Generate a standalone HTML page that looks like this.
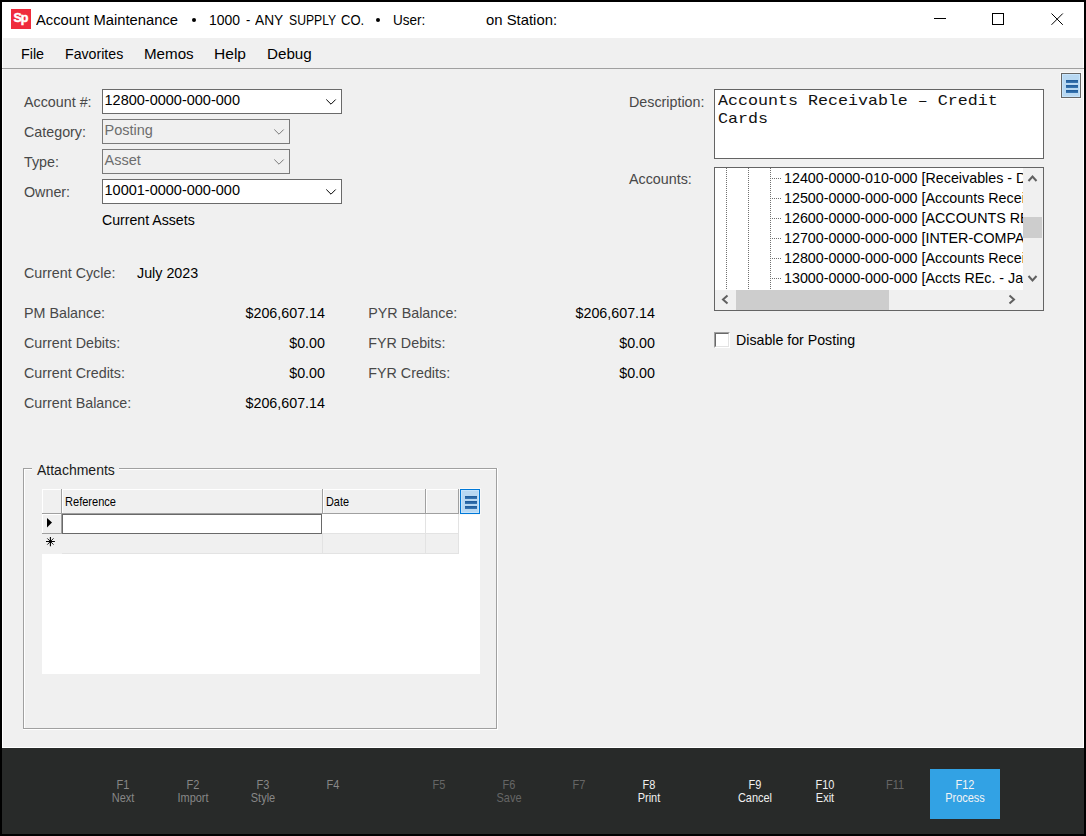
<!DOCTYPE html>
<html><head><meta charset="utf-8">
<style>
html,body{margin:0;padding:0;}
body{width:1086px;height:836px;position:relative;overflow:hidden;background:#000;font-family:"Liberation Sans",sans-serif;}
.a{position:absolute;}
.t{position:absolute;white-space:pre;line-height:1;}
</style></head><body>
<div class="a" style="left:2px;top:2px;width:1082px;height:36px;background:#fff"></div>
<div class="a" style="left:2px;top:38px;width:1082px;height:30px;background:#f0f0f0"></div>
<div class="a" style="left:2px;top:38px;width:1px;height:30px;background:#fff"></div>
<div class="a" style="left:1083px;top:38px;width:1px;height:30px;background:#fff"></div>
<div class="a" style="left:2px;top:68px;width:1082px;height:1px;background:#a0a0a0"></div>
<div class="a" style="left:2px;top:69px;width:1082px;height:679px;background:#f0f0f0"></div>
<div class="a" style="left:2px;top:69px;width:1px;height:679px;background:#fff"></div>
<div class="a" style="left:1083px;top:69px;width:1px;height:679px;background:#fff"></div>
<div class="a" style="left:2px;top:747px;width:1082px;height:1px;background:#fff"></div>
<div class="a" style="left:2px;top:748px;width:1082px;height:86px;background:#282a29"></div>
<div class="a" style="left:11px;top:9px;width:20px;height:20px;background:#ef2b3c;"></div>
<div class="t" style="left:13.5px;top:12px;font-size:12.5px;font-weight:bold;color:#fff;letter-spacing:-1.1px;-webkit-text-stroke:0.5px #fff">Sp</div>
<div class="a" style="left:192px;top:18px;width:4px;height:4px;background:#000;border-radius:2px"></div>
<div class="a" style="left:376px;top:18px;width:4px;height:4px;background:#000;border-radius:2px"></div>
<div class="a" style="left:934px;top:18px;width:12px;height:1px;background:#000"></div>
<div class="a" style="left:992px;top:13px;width:12px;height:12px;box-sizing:border-box;border:1px solid #000"></div>
<svg class="a" style="left:1050px;top:12px" width="15" height="15"><path d="M1.5 1.5 L12.8 12.8 M12.8 1.5 L1.5 12.8" stroke="#000" stroke-width="1"/></svg>
<div class="a" style="left:1060px;top:72px;width:22px;height:27px;background:#f8f8f8"></div>
<div class="a" style="left:1061px;top:73px;width:20px;height:25px;box-sizing:border-box;border:1px solid #666;background:#b8d8f2;box-shadow:inset 0 0 0 1px #c6e4fc"></div>
<div class="a" style="left:1066px;top:80px;width:12px;height:3px;background:linear-gradient(#1c5898,#3a78b4)"></div>
<div class="a" style="left:1066px;top:85px;width:12px;height:3px;background:linear-gradient(#1c5898,#3a78b4)"></div>
<div class="a" style="left:1066px;top:90px;width:12px;height:3px;background:linear-gradient(#1c5898,#3a78b4)"></div>
<div class="a" style="left:102px;top:89px;width:240px;height:25px;box-sizing:border-box;border:1px solid #6a6a6a;background:#fff"></div>
<svg class="a" style="left:325px;top:98px" width="12" height="8"><path d="M1.3 1.5 L6 6.2 L10.7 1.5" fill="none" stroke="#000" stroke-width="1"/></svg>
<div class="a" style="left:102px;top:119px;width:188px;height:25px;box-sizing:border-box;border:1px solid #7a7a7a;background:#f0f0f0"></div>
<svg class="a" style="left:273px;top:128px" width="12" height="8"><path d="M1.3 1.5 L6 6.2 L10.7 1.5" fill="none" stroke="#7a7a7a" stroke-width="1"/></svg>
<div class="a" style="left:102px;top:149px;width:188px;height:25px;box-sizing:border-box;border:1px solid #7a7a7a;background:#f0f0f0"></div>
<svg class="a" style="left:273px;top:158px" width="12" height="8"><path d="M1.3 1.5 L6 6.2 L10.7 1.5" fill="none" stroke="#7a7a7a" stroke-width="1"/></svg>
<div class="a" style="left:102px;top:179px;width:240px;height:25px;box-sizing:border-box;border:1px solid #6a6a6a;background:#fff"></div>
<svg class="a" style="left:325px;top:188px" width="12" height="8"><path d="M1.3 1.5 L6 6.2 L10.7 1.5" fill="none" stroke="#000" stroke-width="1"/></svg>
<div class="a" style="left:714px;top:89px;width:330px;height:70px;box-sizing:border-box;border:1px solid #646464;background:#fff"></div>
<div class="a" style="left:714px;top:167px;width:330px;height:144px;box-sizing:border-box;border:1px solid #646464;background:#fff"></div>
<div class="a" style="left:726px;top:168px;width:1px;height:122px;background:repeating-linear-gradient(to bottom,#707070 0 1px,transparent 1px 2px)"></div>
<div class="a" style="left:748px;top:168px;width:1px;height:122px;background:repeating-linear-gradient(to bottom,#707070 0 1px,transparent 1px 2px)"></div>
<div class="a" style="left:770px;top:168px;width:1px;height:122px;background:repeating-linear-gradient(to bottom,#707070 0 1px,transparent 1px 2px)"></div>
<div class="a" style="left:715px;top:168px;width:308px;height:122px;overflow:hidden">
<div class="a" style="left:57px;top:10px;width:9px;height:1px;background:repeating-linear-gradient(to right,#707070 0 1px,transparent 1px 2px)"></div>
<div class="t" style="left:69px;top:2.90px;font-size:14.3px;color:#000">12400-0000-010-000 [Receivables - D</div>
<div class="a" style="left:57px;top:30px;width:9px;height:1px;background:repeating-linear-gradient(to right,#707070 0 1px,transparent 1px 2px)"></div>
<div class="t" style="left:69px;top:22.90px;font-size:14.3px;color:#000">12500-0000-000-000 [Accounts Receivable</div>
<div class="a" style="left:57px;top:50px;width:9px;height:1px;background:repeating-linear-gradient(to right,#707070 0 1px,transparent 1px 2px)"></div>
<div class="t" style="left:69px;top:42.90px;font-size:14.3px;color:#000">12600-0000-000-000 [ACCOUNTS RECEIVABLE</div>
<div class="a" style="left:57px;top:70px;width:9px;height:1px;background:repeating-linear-gradient(to right,#707070 0 1px,transparent 1px 2px)"></div>
<div class="t" style="left:69px;top:62.90px;font-size:14.3px;color:#000">12700-0000-000-000 [INTER-COMPANY</div>
<div class="a" style="left:57px;top:90px;width:9px;height:1px;background:repeating-linear-gradient(to right,#707070 0 1px,transparent 1px 2px)"></div>
<div class="t" style="left:69px;top:82.90px;font-size:14.3px;color:#000">12800-0000-000-000 [Accounts Receivable</div>
<div class="a" style="left:57px;top:110px;width:9px;height:1px;background:repeating-linear-gradient(to right,#707070 0 1px,transparent 1px 2px)"></div>
<div class="t" style="left:69px;top:102.90px;font-size:14.3px;color:#000">13000-0000-000-000 [Accts REc. - Jan</div>
</div>
<div class="a" style="left:1023px;top:168px;width:20px;height:122px;background:#f0f0f0"></div>
<div class="a" style="left:1023px;top:217px;width:19px;height:21px;background:#cdcdcd"></div>
<svg class="a" style="left:1027px;top:174px" width="11" height="9"><path d="M1.5 7 L5.5 2.5 L9.5 7" fill="none" stroke="#606060" stroke-width="2"/></svg>
<svg class="a" style="left:1027px;top:274px" width="11" height="9"><path d="M1.5 2 L5.5 6.5 L9.5 2" fill="none" stroke="#606060" stroke-width="2"/></svg>
<div class="a" style="left:715px;top:290px;width:328px;height:20px;background:#f0f0f0"></div>
<div class="a" style="left:736px;top:290px;width:153px;height:20px;background:#cdcdcd"></div>
<svg class="a" style="left:720px;top:294px" width="10" height="11"><path d="M7.5 1.5 L3 5.5 L7.5 9.5" fill="none" stroke="#606060" stroke-width="2"/></svg>
<svg class="a" style="left:1007px;top:294px" width="10" height="11"><path d="M2.5 1.5 L7 5.5 L2.5 9.5" fill="none" stroke="#606060" stroke-width="2"/></svg>
<div class="a" style="left:714px;top:332px;width:16px;height:16px;box-sizing:border-box;border-top:1px solid #a0a0a0;border-left:1px solid #a0a0a0;border-right:1px solid #fff;border-bottom:1px solid #fff;background:#fff"></div>
<div class="a" style="left:715px;top:333px;width:14px;height:14px;box-sizing:border-box;border-top:1px solid #696969;border-left:1px solid #696969;border-right:1px solid #e3e3e3;border-bottom:1px solid #e3e3e3;background:#fff"></div>
<div class="a" style="left:23px;top:468px;width:475px;height:262px;box-sizing:border-box;border-right:1px solid #fff;border-bottom:1px solid #fff"></div>
<div class="a" style="left:23px;top:468px;width:474px;height:261px;box-sizing:border-box;border:1px solid #a0a0a0"></div>
<div class="a" style="left:24px;top:469px;width:472px;height:259px;box-sizing:border-box;border-left:1px solid #fff;border-top:1px solid #fff"></div>
<div class="a" style="left:32px;top:462px;width:87px;height:14px;background:#f0f0f0"></div>
<div class="a" style="left:42px;top:489px;width:438px;height:185px;background:#fff"></div>
<div class="a" style="left:42px;top:489px;width:416px;height:25px;background:#f0f0f0"></div>
<div class="a" style="left:42px;top:489px;width:416px;height:1px;background:#fff"></div>
<div class="a" style="left:62px;top:489px;width:1px;height:24px;background:#fff"></div>
<div class="a" style="left:42px;top:489px;width:1px;height:24px;background:#fff"></div>
<div class="a" style="left:323px;top:489px;width:1px;height:24px;background:#fff"></div>
<div class="a" style="left:426px;top:489px;width:1px;height:24px;background:#fff"></div>
<div class="a" style="left:61px;top:489px;width:1px;height:25px;background:#a0a0a0"></div>
<div class="a" style="left:322px;top:489px;width:1px;height:25px;background:#a0a0a0"></div>
<div class="a" style="left:425px;top:489px;width:1px;height:25px;background:#a0a0a0"></div>
<div class="a" style="left:458px;top:489px;width:1px;height:25px;background:#a0a0a0"></div>
<div class="a" style="left:42px;top:513px;width:417px;height:1px;background:#a0a0a0"></div>
<div class="a" style="left:42px;top:514px;width:19px;height:19px;background:#f0f0f0;box-shadow:inset 1px 1px 0 #fff"></div>
<div class="a" style="left:42px;top:533px;width:20px;height:1px;background:#a0a0a0"></div>
<div class="a" style="left:61px;top:514px;width:1px;height:40px;background:#a0a0a0"></div>
<div class="a" style="left:62px;top:514px;width:260px;height:20px;box-sizing:border-box;border:1px solid #696969;background:#fff"></div>
<div class="a" style="left:322px;top:533px;width:136px;height:1px;background:#e3e3e3"></div>
<div class="a" style="left:425px;top:514px;width:1px;height:40px;background:#e3e3e3"></div>
<div class="a" style="left:458px;top:514px;width:1px;height:40px;background:#e3e3e3"></div>
<svg class="a" style="left:47px;top:518px" width="6" height="10"><path d="M0 0 L5 4.5 L0 9.5 Z" fill="#000"/></svg>
<div class="a" style="left:42px;top:534px;width:416px;height:20px;background:#f0f0f0"></div>
<div class="a" style="left:62px;top:553px;width:396px;height:1px;background:#e3e3e3"></div>
<div class="a" style="left:322px;top:534px;width:1px;height:20px;background:#e3e3e3"></div>
<div class="a" style="left:425px;top:534px;width:1px;height:20px;background:#e3e3e3"></div>
<svg class="a" style="left:45px;top:536px" width="11" height="11"><path d="M5.4 1 V10.2 M1 5.5 H9.9" stroke="#000" stroke-width="1.1"/><path d="M2.3 2.4 L8.5 8.6 M8.5 2.4 L2.3 8.6" stroke="#000" stroke-width="0.9"/><circle cx="5.4" cy="5.5" r="1.3" fill="#000"/></svg>
<div class="a" style="left:459px;top:488px;width:22px;height:27px;background:#f8f8f8"></div>
<div class="a" style="left:460px;top:489px;width:20px;height:25px;box-sizing:border-box;border:1px solid #0078d7;background:#b8d8f2;box-shadow:inset 0 0 0 1px #c6e4fc"></div>
<div class="a" style="left:465px;top:496px;width:12px;height:3px;background:linear-gradient(#1c5898,#3a78b4)"></div>
<div class="a" style="left:465px;top:501px;width:12px;height:3px;background:linear-gradient(#1c5898,#3a78b4)"></div>
<div class="a" style="left:465px;top:506px;width:12px;height:3px;background:linear-gradient(#1c5898,#3a78b4)"></div>
<div class="t" style="left:88px;top:778.90px;width:70px;text-align:center;font-size:12.4px;color:#878787;transform:scaleX(0.885)">F1</div>
<div class="t" style="left:88px;top:791.90px;width:70px;text-align:center;font-size:12.4px;color:#878787;transform:scaleX(0.885)">Next</div>
<div class="t" style="left:158px;top:778.90px;width:70px;text-align:center;font-size:12.4px;color:#878787;transform:scaleX(0.885)">F2</div>
<div class="t" style="left:158px;top:791.90px;width:70px;text-align:center;font-size:12.4px;color:#878787;transform:scaleX(0.885)">Import</div>
<div class="t" style="left:228px;top:778.90px;width:70px;text-align:center;font-size:12.4px;color:#878787;transform:scaleX(0.885)">F3</div>
<div class="t" style="left:228px;top:791.90px;width:70px;text-align:center;font-size:12.4px;color:#878787;transform:scaleX(0.885)">Style</div>
<div class="t" style="left:298px;top:778.90px;width:70px;text-align:center;font-size:12.4px;color:#878787;transform:scaleX(0.885)">F4</div>
<div class="t" style="left:404px;top:778.90px;width:70px;text-align:center;font-size:12.4px;color:#666666;transform:scaleX(0.885)">F5</div>
<div class="t" style="left:474px;top:778.90px;width:70px;text-align:center;font-size:12.4px;color:#666666;transform:scaleX(0.885)">F6</div>
<div class="t" style="left:474px;top:791.90px;width:70px;text-align:center;font-size:12.4px;color:#666666;transform:scaleX(0.885)">Save</div>
<div class="t" style="left:544px;top:778.90px;width:70px;text-align:center;font-size:12.4px;color:#666666;transform:scaleX(0.885)">F7</div>
<div class="t" style="left:614px;top:778.90px;width:70px;text-align:center;font-size:12.4px;color:#f0f0f0;transform:scaleX(0.885)">F8</div>
<div class="t" style="left:614px;top:791.90px;width:70px;text-align:center;font-size:12.4px;color:#f0f0f0;transform:scaleX(0.885)">Print</div>
<div class="t" style="left:720px;top:778.90px;width:70px;text-align:center;font-size:12.4px;color:#f0f0f0;transform:scaleX(0.885)">F9</div>
<div class="t" style="left:720px;top:791.90px;width:70px;text-align:center;font-size:12.4px;color:#f0f0f0;transform:scaleX(0.885)">Cancel</div>
<div class="t" style="left:790px;top:778.90px;width:70px;text-align:center;font-size:12.4px;color:#f0f0f0;transform:scaleX(0.885)">F10</div>
<div class="t" style="left:790px;top:791.90px;width:70px;text-align:center;font-size:12.4px;color:#f0f0f0;transform:scaleX(0.885)">Exit</div>
<div class="t" style="left:860px;top:778.90px;width:70px;text-align:center;font-size:12.4px;color:#666666;transform:scaleX(0.885)">F11</div>
<div class="a" style="left:930px;top:769px;width:70px;height:50px;background:#32a2e4"></div>
<div class="t" style="left:930px;top:778.90px;width:70px;text-align:center;font-size:12.4px;color:#f4f4f4;transform:scaleX(0.885)">F12</div>
<div class="t" style="left:930px;top:791.90px;width:70px;text-align:center;font-size:12.4px;color:#f4f4f4;transform:scaleX(0.885)">Process</div>
<div class="t" style="left:36.40px;top:12.76px;font-size:14.7px;color:#000;transform:scaleX(1.0051);transform-origin:0 0;">Account Maintenance</div>
<div class="t" style="left:209.35px;top:12.84px;font-size:14.6px;color:#000;transform:scaleX(0.9538);transform-origin:0 0;">1000</div>
<div class="t" style="left:245.80px;top:12.84px;font-size:14.6px;color:#000;transform:scaleX(0.8800);transform-origin:0 0;">-</div>
<div class="t" style="left:255.10px;top:12.84px;font-size:14.6px;color:#000;transform:scaleX(0.9414);transform-origin:0 0;">ANY</div>
<div class="t" style="left:288.50px;top:12.84px;font-size:14.6px;color:#000;transform:scaleX(0.8349);transform-origin:0 0;">SUPPLY</div>
<div class="t" style="left:340.70px;top:12.84px;font-size:14.6px;color:#000;transform:scaleX(0.8919);transform-origin:0 0;">CO.</div>
<div class="t" style="left:392.87px;top:12.84px;font-size:14.6px;color:#000;transform:scaleX(0.9265);transform-origin:0 0;">User:</div>
<div class="t" style="left:485.90px;top:12.84px;font-size:14.6px;color:#000;transform:scaleX(1.0186);transform-origin:0 0;">on Station:</div>
<div class="t" style="left:20.62px;top:47.04px;font-size:14.6px;color:#000;transform:scaleX(0.9822);transform-origin:0 0;">File</div>
<div class="t" style="left:64.63px;top:47.04px;font-size:14.6px;color:#000;transform:scaleX(0.9708);transform-origin:0 0;">Favorites</div>
<div class="t" style="left:143.56px;top:47.04px;font-size:14.6px;color:#000;transform:scaleX(1.0377);transform-origin:0 0;">Memos</div>
<div class="t" style="left:213.83px;top:47.04px;font-size:14.6px;color:#000;transform:scaleX(1.0658);transform-origin:0 0;">Help</div>
<div class="t" style="left:266.66px;top:47.04px;font-size:14.6px;color:#000;transform:scaleX(1.0409);transform-origin:0 0;">Debug</div>
<div class="t" style="left:64.59px;top:495.77px;font-size:12.2px;color:#000;transform:scaleX(0.9071);transform-origin:0 0;">Reference</div>
<div class="t" style="left:325.91px;top:495.77px;font-size:12.2px;color:#000;transform:scaleX(0.8932);transform-origin:0 0;">Date</div>
<div class="t" style="left:24px;top:95.20px;font-size:14.3px;color:#484848;">Account #:</div>
<div class="t" style="left:24px;top:125.20px;font-size:14.3px;color:#484848;">Category:</div>
<div class="t" style="left:24px;top:155.20px;font-size:14.3px;color:#484848;">Type:</div>
<div class="t" style="left:24px;top:185.20px;font-size:14.3px;color:#484848;">Owner:</div>
<div class="t" style="left:104.5px;top:93.23px;font-size:14.5px;color:#000;">12800-0000-000-000</div>
<div class="t" style="left:104.5px;top:123.23px;font-size:14.5px;color:#6d6d6d;">Posting</div>
<div class="t" style="left:104.5px;top:153.23px;font-size:14.5px;color:#6d6d6d;">Asset</div>
<div class="t" style="left:104.5px;top:183.23px;font-size:14.5px;color:#000;">10001-0000-000-000</div>
<div class="t" style="left:102px;top:213.32px;font-size:14.15px;color:#000;">Current Assets</div>
<div class="t" style="left:24px;top:266.20px;font-size:14.3px;color:#484848;">Current Cycle:</div>
<div class="t" style="left:137px;top:265.90px;font-size:14.3px;color:#000;">July 2023</div>
<div class="t" style="left:24px;top:306.20px;font-size:14.3px;color:#484848;">PM Balance:</div>
<div class="t" style="left:24px;top:336.20px;font-size:14.3px;color:#484848;">Current Debits:</div>
<div class="t" style="left:24px;top:366.20px;font-size:14.3px;color:#484848;">Current Credits:</div>
<div class="t" style="left:24px;top:396.20px;font-size:14.3px;color:#484848;">Current Balance:</div>
<div class="t" style="right:761px;top:305.90px;font-size:14.3px;color:#000;">$206,607.14</div>
<div class="t" style="right:761px;top:335.90px;font-size:14.3px;color:#000;">$0.00</div>
<div class="t" style="right:761px;top:365.90px;font-size:14.3px;color:#000;">$0.00</div>
<div class="t" style="right:761px;top:395.90px;font-size:14.3px;color:#000;">$206,607.14</div>
<div class="t" style="left:368.3px;top:306.20px;font-size:14.3px;color:#484848;">PYR Balance:</div>
<div class="t" style="left:368.3px;top:336.20px;font-size:14.3px;color:#484848;">FYR Debits:</div>
<div class="t" style="left:368.3px;top:366.20px;font-size:14.3px;color:#484848;">FYR Credits:</div>
<div class="t" style="right:431px;top:305.90px;font-size:14.3px;color:#000;">$206,607.14</div>
<div class="t" style="right:431px;top:335.90px;font-size:14.3px;color:#000;">$0.00</div>
<div class="t" style="right:431px;top:365.90px;font-size:14.3px;color:#000;">$0.00</div>
<div class="t" style="left:629px;top:95.20px;font-size:14.3px;color:#484848;">Description:</div>
<div class="t" style="left:629px;top:172.20px;font-size:14.3px;color:#484848;">Accounts:</div>
<div class="t" style="left:718px;top:94.08px;font-size:14.2px;color:#111;font-family:'Liberation Mono',monospace;transform:scaleX(1.1737);transform-origin:0 0">Accounts Receivable &#8211; Credit</div>
<div class="t" style="left:718px;top:112.08px;font-size:14.2px;color:#111;font-family:'Liberation Mono',monospace;transform:scaleX(1.1737);transform-origin:0 0">Cards</div>
<div class="t" style="left:736px;top:332.98px;font-size:14.2px;color:#000;">Disable for Posting</div>
<div class="t" style="left:37px;top:463.15px;font-size:14px;color:#1a1a1a;">Attachments</div>
</body></html>
